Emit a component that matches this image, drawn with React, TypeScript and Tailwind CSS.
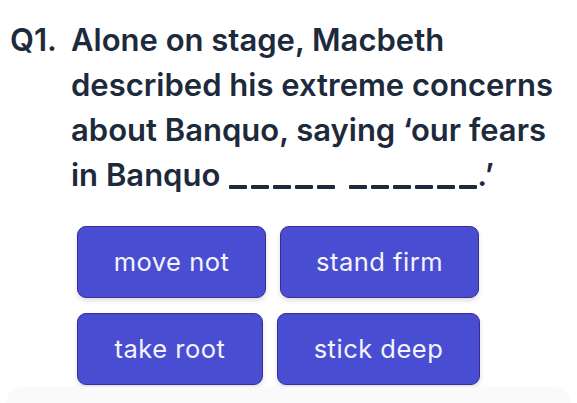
import React from 'react';

type Choice = { label: string; w: string };

const ROWS: Choice[][] = [
  [
    { label: 'move not', w: 'w-[189px]' },
    { label: 'stand firm', w: 'w-[199px]' },
  ],
  [
    { label: 'take root', w: 'w-[186px]' },
    { label: 'stick deep', w: 'w-[203px]' },
  ],
];

const ChoiceButton: React.FC<{ choice: Choice }> = ({ choice }) => (
  <button
    className={`${choice.w} h-[72px] rounded-[9px] border-[1.5px] border-[#3a2c9c] bg-[#484dd1] text-[25.5px] tracking-[0.5px] text-[#f4f4ff] shadow-[0_3px_5px_rgba(0,0,0,0.12)]`}
  >
    {choice.label}
  </button>
);

// blank made of separate dashes, like the worksheet
const Blank: React.FC<{ n: number; className?: string }> = ({ n, className = '' }) => (
  <span className={`inline-flex gap-[4px] ${className}`}>
    {Array.from({ length: n }).map((_, i) => (
      <span key={i} className="relative top-[3px] inline-block h-[4px] w-[18px] rounded-[1px] bg-[#1d2a3b]" />
    ))}
  </span>
);

export default function App() {
  return (
    <div
      className="relative h-[403px] w-[577px] overflow-hidden bg-white"
      style={{ fontFamily: 'Inter, "Noto Sans", sans-serif' }}
    >
      {/* Question */}
      <div className="flex pl-[10px] pt-[17px] text-[31px] font-semibold leading-[45px] text-[#1d2a3b]">
        <div className="w-[61px] shrink-0">Q1.</div>
        <p>
          Alone on stage, Macbeth
          <br />
          described his extreme concerns
          <br />
          about Banquo, saying ‘our fears
          <br />
          in Banquo
          <Blank n={5} className="ml-[9px]" />
          <Blank n={6} className="ml-[14px]" />
          .’
        </p>
      </div>

      {/* Answer choices */}
      <div className="mt-[29px] flex flex-col gap-[15px] pl-[77px]">
        {ROWS.map((row, i) => (
          <div key={i} className="flex gap-[14px]">
            {row.map(c => (
              <ChoiceButton key={c.label} choice={c} />
            ))}
          </div>
        ))}
      </div>

      {/* next card edge */}
      <div className="absolute bottom-0 left-[6px] right-[6px] h-[16px] rounded-t-[40px] bg-[#fafafa]" />
    </div>
  );
}
